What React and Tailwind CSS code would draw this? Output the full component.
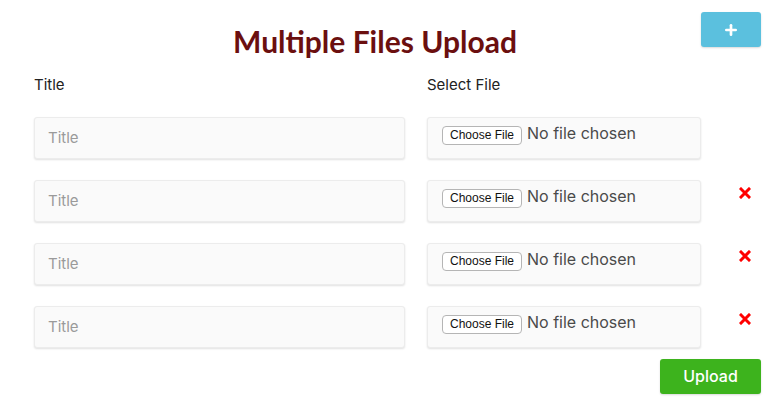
import { Plus } from 'lucide-react';

const rows = [
  { id: 1, removable: false },
  { id: 2, removable: true },
  { id: 3, removable: true },
  { id: 4, removable: true },
];

function RemoveIcon() {
  return (
    <svg width="12" height="12" viewBox="0 0 12 12" aria-hidden="true">
      <path d="M2 2 L10 10 M10 2 L2 10" stroke="#f00" strokeWidth="3" strokeLinecap="square" />
    </svg>
  );
}

function FileField() {
  return (
    <div className="flex h-[42px] w-[274px] items-start gap-[5px] rounded-[3px] border border-[#ececec] bg-[#fafafa] pl-[14px] pt-[8px] shadow-[0_1px_2px_rgba(0,0,0,0.12)]">
      <span
        className="flex h-[19px] w-[80px] items-center justify-center rounded-[4px] border border-[#b5b5b5] bg-white text-[12px] text-[#111]"
        style={{ fontFamily: '"Liberation Sans", Arial, sans-serif' }}
      >
        Choose File
      </span>
      <span className="-mt-[5px] text-[16px] text-[#4a4a4a]">No file chosen</span>
    </div>
  );
}

export default function App() {
  return (
    <div
      className="h-[419px] w-[784px] bg-white"
      style={{ fontFamily: 'Inter, "Open Sans", sans-serif' }}
    >
      <div className="flex items-start pl-[49px] pr-[23px] pt-[12px]">
        <h1
          className="mt-[11px] flex-1 text-center text-[30px] font-bold leading-[36px] text-[#6b0f0f]"
          style={{ fontFamily: 'Lato, "Open Sans", sans-serif' }}
        >
          Multiple Files Upload
        </h1>
        <button className="flex h-[35px] w-[60px] items-center justify-center rounded-[3px] bg-[#5bc0de] text-white shadow-[0_1px_2px_rgba(0,0,0,0.15)]">
          <Plus size={16} strokeWidth={4} />
        </button>
      </div>

      <div className="mt-[15px] flex pl-[34px] text-[15px] text-[#222]">
        <div className="w-[393px]">Title</div>
        <div>Select File</div>
      </div>

      <div className="mt-[20px] flex flex-col gap-[21px] pl-[34px]">
        {rows.map((row) => (
          <div key={row.id} className="flex items-start">
            <input
              placeholder="Title"
              className="h-[42px] w-[371px] rounded-[3px] border border-[#ececec] bg-[#fafafa] px-[13px] text-[15px] text-[#333] shadow-[0_1px_2px_rgba(0,0,0,0.12)] outline-none placeholder:text-[#9a9a9a]"
            />
            <div className="ml-[22px]">
              <FileField />
            </div>
            {row.removable && (
              <div className="ml-[38px] mt-[7px]">
                <RemoveIcon />
              </div>
            )}
          </div>
        ))}
      </div>

      <div className="mt-[11px] flex justify-end pr-[23px]">
        <button className="h-[35px] w-[101px] rounded-[3px] bg-[#3db31d] text-[16px] font-medium text-white shadow-[0_1px_2px_rgba(0,0,0,0.15)]">
          Upload
        </button>
      </div>
    </div>
  );
}
